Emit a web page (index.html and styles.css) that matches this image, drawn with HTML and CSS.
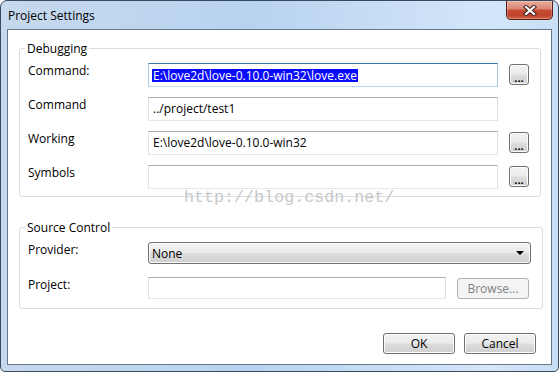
FILE: index.html
```html
<!DOCTYPE html>
<html lang="en">
<head>
    <meta charset="UTF-8">
    <meta name="viewport" content="width=device-width, initial-scale=1.0">
    <title>Project Settings</title>
    <link rel="stylesheet" href="styles.css">
</head>
<body>
    <div class="window">
        <header class="titlebar">
            <span class="title">Project Settings</span>
            <button class="close-btn" aria-label="Close">
                <svg width="14" height="11" viewBox="0 0 14 11">
                    <path d="M3 2 L11 9 M11 2 L3 9" stroke="#3b2320" stroke-width="4.2" stroke-linecap="square"/>
                    <path d="M3 2 L11 9 M11 2 L3 9" stroke="#ffffff" stroke-width="2.2" stroke-linecap="square"/>
                </svg>
            </button>
        </header>

        <div class="client">
            <fieldset class="group group-debug">
                <legend>Debugging</legend>
                <div class="row">
                    <label>Command:</label>
                    <div class="textbox focused"><span class="sel">E:\love2d\love-0.10.0-win32\love.exe</span></div>
                    <button class="btn btn-dots">...</button>
                </div>
                <div class="row">
                    <label>Command</label>
                    <div class="textbox">../project/test1</div>
                </div>
                <div class="row">
                    <label>Working</label>
                    <div class="textbox">E:\love2d\love-0.10.0-win32</div>
                    <button class="btn btn-dots">...</button>
                </div>
                <div class="row">
                    <label>Symbols</label>
                    <div class="textbox"></div>
                    <button class="btn btn-dots">...</button>
                </div>
            </fieldset>

            <fieldset class="group group-source">
                <legend>Source Control</legend>
                <div class="row">
                    <label>Provider:</label>
                    <div class="combo">
                        <span>None</span>
                        <span class="combo-arrow"></span>
                    </div>
                </div>
                <div class="row">
                    <label>Project:</label>
                    <div class="textbox textbox-short"></div>
                    <button class="btn btn-browse" disabled>Browse...</button>
                </div>
            </fieldset>

            <div class="dialog-buttons">
                <button class="btn btn-dialog">OK</button>
                <button class="btn btn-dialog">Cancel</button>
            </div>

            <!-- watermark stamped over the screenshot -->
            <div class="watermark">http://blog.csdn.net/</div>
        </div>
    </div>
</body>
</html>
```

FILE: styles.css
```css
:root {
    --frame: #bcd5ef;
    --frame-edge: #3a4a5e;
    --group-line: #d5dfe5;
    --btn-border: #707070;
}

* {
    box-sizing: border-box;
}

body {
    margin: 0;
    font-family: 'Open Sans', 'Noto Sans', sans-serif;
    font-size: 12px;
    color: #000;
}

.window {
    width: 559px;
    height: 372px;
    border: 1px solid var(--frame-edge);
    border-radius: 7px 7px 5px 5px;
    background: linear-gradient(to right, #c6d9ed 0%, #b8d3f0 45%, #d4e6f9 88%, #c9def4 100%);
    padding: 0 6px 6px;
    display: flex;
    flex-direction: column;
    overflow: hidden;
}

.titlebar {
    height: 28px;
    margin: 0 -6px;
    padding: 0 5px 0 7px;
    display: flex;
    align-items: center;
    justify-content: space-between;
}

.title {
    font-size: 12px;
    line-height: 15px;
}

.close-btn {
    align-self: flex-start;
    width: 47px;
    height: 19px;
    padding: 0;
    border: 1px solid #5a1d14;
    border-top: none;
    border-radius: 0 0 5px 5px;
    background: linear-gradient(#e8ab9c 0%, #d98672 45%, #c74a33 50%, #c0442d 80%, #d0644a 100%);
    box-shadow: inset 0 0 0 1px rgba(255,255,255,0.25);
    display: flex;
    align-items: center;
    justify-content: center;
}

.client {
    flex: 1;
    position: relative;
    background: #fff;
    border: 1px solid #67788c;
    display: flex;
    flex-direction: column;
}

.group {
    margin: 11px 10px 0 11px;
    padding: 7px 11px 7px 8px;
    border: 1px solid var(--group-line);
    border-radius: 3px;
    display: flex;
    flex-direction: column;
    gap: 10px;
}

.group legend {
    margin-left: -3px;
    padding: 0 2px;
    line-height: 15px;
}

.group-source {
    margin-top: 23px;
    padding-bottom: 9px;
    gap: 13px;
}

.row {
    display: flex;
    align-items: flex-start;
}

.row label {
    width: 120px;
    flex-shrink: 0;
    line-height: 15px;
}

.textbox {
    width: 350px;
    height: 24px;
    border: 1px solid;
    border-color: #abadb3 #dbdfe6 #e3e9ef #e2e3ea;
    padding: 0 4px;
    line-height: 22px;
    white-space: nowrap;
    overflow: hidden;
}

.textbox.focused {
    border-color: #3d7bad #a4c9e3 #b7d9ed #a4c9e3;
    padding-left: 3px;
}

.sel {
    display: inline-block;
    background: #0a0aff;
    color: #fff;
    line-height: 13px;
    padding: 0 1px;
    vertical-align: middle;
}

.textbox-short {
    width: 298px;
    height: 22px;
    line-height: 20px;
}

.btn {
    font-family: inherit;
    font-size: 12px;
    color: #000;
    border: 1px solid var(--btn-border);
    border-radius: 3px;
    background: linear-gradient(#f2f2f2 0%, #ebebeb 48%, #dddddd 52%, #cfcfcf 100%);
    box-shadow: inset 0 0 0 1px #fcfcfc;
    padding: 0;
}

.btn-dots {
    width: 20px;
    height: 21px;
    margin: 1px 0 0 11px;
    line-height: 19px;
    font-weight: bold;
    font-size: 11px;
    padding-top: 3px;
}

.btn-browse {
    width: 72px;
    height: 21px;
    margin: 1px 0 0 11px;
    color: #838383;
    border-color: #adb2b5;
    background: #f4f4f4;
    box-shadow: none;
}

.combo {
    width: 383px;
    height: 22px;
    border: 1px solid var(--btn-border);
    border-radius: 3px;
    background: linear-gradient(#f2f2f2 0%, #ebebeb 48%, #dddddd 52%, #cfcfcf 100%);
    box-shadow: inset 0 0 0 1px #fcfcfc;
    padding: 0 6px 0 3px;
    display: flex;
    align-items: center;
    justify-content: space-between;
}

.combo-arrow {
    width: 0;
    height: 0;
    border-left: 4px solid transparent;
    border-right: 4px solid transparent;
    border-top: 4px solid #000;
}

.dialog-buttons {
    margin-top: auto;
    padding: 0 15px 10px 0;
    display: flex;
    justify-content: flex-end;
    gap: 9px;
}

.btn-dialog {
    width: 72px;
    height: 21px;
}

.watermark {
    position: absolute;
    left: 176px;
    top: 158px;
    font-family: 'Liberation Mono', monospace;
    font-size: 16.7px;
    line-height: 20px;
    color: #c8c8c8;
    pointer-events: none;
}
```
